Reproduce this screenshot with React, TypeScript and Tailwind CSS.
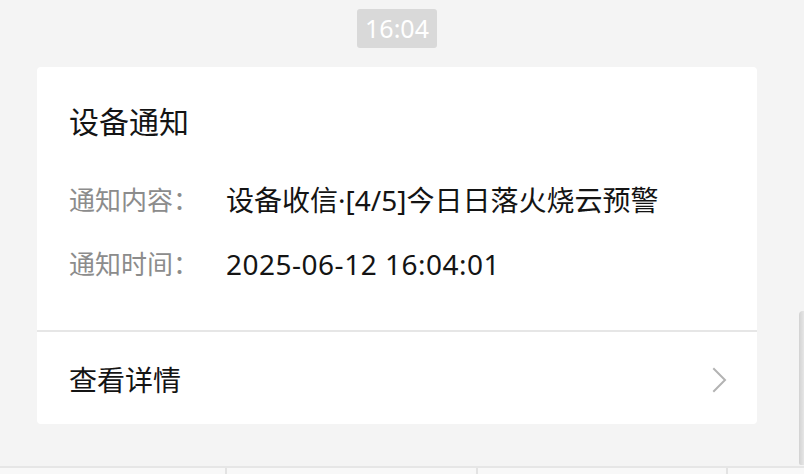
import React from 'react';

const font = { fontFamily: '"Noto Sans", "Noto Sans CJK SC", sans-serif' };

function Chevron() {
  return (
    <svg width="16" height="26" viewBox="0 0 16 26" fill="none">
      <polyline points="2,2 13,13 2,24" stroke="#b3b3b3" strokeWidth="2" strokeLinecap="square" />
    </svg>
  );
}

function InfoRow({ label, value, wide }: { label: string; value: string; wide?: boolean }) {
  return (
    <div className="flex items-center h-[40px] leading-[40px]">
      <span className="w-[157px] shrink-0 text-[26px] text-[#8c8c8c]">{label}</span>
      <span className={wide ? 'text-[28px] tracking-[0.5px] text-[#141414]' : 'text-[28px] text-[#141414]'}>
        {value}
      </span>
    </div>
  );
}

export default function App() {
  return (
    <div
      className="relative w-[804px] h-[474px] bg-[#f4f4f4] overflow-hidden flex flex-col"
      style={font}
    >
      {/* time stamp */}
      <div className="mt-[9px] mr-[10px] self-center h-[39px] px-[8px] rounded-[3px] bg-[#d9d9d9] text-white text-[25px] leading-[39px]">
        16:04
      </div>

      {/* card */}
      <div className="mt-[19px] ml-[37px] w-[720px] bg-white rounded-[4px]">
        <div className="pl-[32px] pr-[32px] pt-[35px] pb-[46px]">
          <div className="text-[30px] leading-[40px] text-[#141414]">设备通知</div>
          <div className="mt-[38px] flex flex-col gap-[24px]">
            <InfoRow label="通知内容：" value="设备收信·[4/5]今日日落火烧云预警" />
            <InfoRow label="通知时间：" value="2025-06-12 16:04:01" wide />
          </div>
        </div>
        <div className="h-[2px] bg-[#e6e6e6]" />
        <div className="h-[92px] pl-[32px] pr-[29px] pt-[4px] flex items-center justify-between">
          <span className="text-[28px] text-[#141414]">查看详情</span>
          <Chevron />
        </div>
      </div>

      {/* bottom bar */}
      <div className="mt-auto h-[2px] bg-[#e6e6e6]" />
      <div className="h-[6px] bg-[#f8f8f8] flex">
        <div className="w-[227px] border-r-2 border-[#e3e3e3]" />
        <div className="w-[251px] border-r-2 border-[#e3e3e3]" />
        <div className="w-[250px] border-r-2 border-[#e3e3e3]" />
        <div className="flex-1" />
      </div>

      {/* scrollbar edge on the right */}
      <div className="absolute right-0 top-[311px] w-[5px] h-[154px] rounded-tl-[4px] rounded-bl-[2px] bg-gradient-to-r from-[#d2d2d2] to-[#e6e6e6]" />
    </div>
  );
}
